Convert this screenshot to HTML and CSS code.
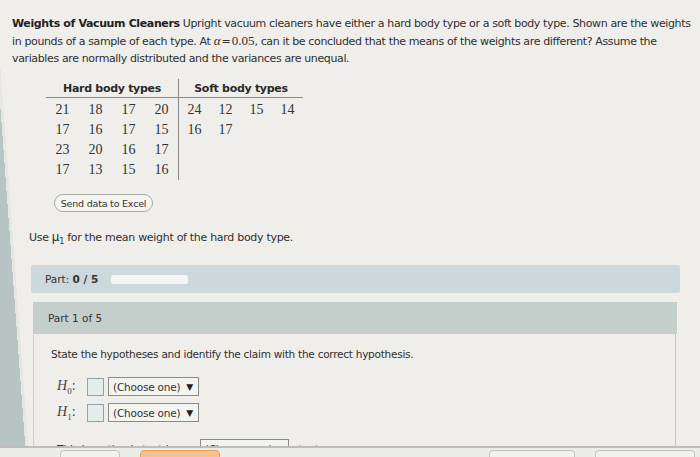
FILE: index.html
```html
<!DOCTYPE html>
<html>
<head>
<meta charset="utf-8">
<link rel="stylesheet" href="styles.css">
</head>
<body>
<div class="page">
  <p class="intro"><b>Weights of Vacuum Cleaners</b> Upright vacuum cleaners have either a hard body type or a soft body type. Shown are the weights in pounds of a sample of each type. At <span class="math">α</span><span class="eq">=</span><span class="num">0.05</span>, can it be concluded that the means of the weights are different? Assume the variables are normally distributed and the variances are unequal.</p>

  <table class="data">
    <thead>
      <tr><th colspan="4" class="hard">Hard body types</th><th colspan="4" class="soft">Soft body types</th></tr>
    </thead>
    <tbody>
      <tr><td>21</td><td>18</td><td>17</td><td>20</td><td class="s first">24</td><td class="s">12</td><td class="s">15</td><td class="s">14</td></tr>
      <tr><td>17</td><td>16</td><td>17</td><td>15</td><td class="s first">16</td><td class="s">17</td><td class="s"></td><td class="s"></td></tr>
      <tr><td>23</td><td>20</td><td>16</td><td>17</td><td class="s first"></td><td class="s"></td><td class="s"></td><td class="s"></td></tr>
      <tr><td>17</td><td>13</td><td>15</td><td>16</td><td class="s first"></td><td class="s"></td><td class="s"></td><td class="s"></td></tr>
    </tbody>
  </table>

  <div class="excel-row"><span class="excel-btn">Send data to Excel</span></div>

  <p class="hint">Use <span class="mu">μ<sub>1</sub></span> for the mean weight of the hard body type.</p>

  <div class="parts">
    <div class="progress">
      <span>Part: <b>0 / 5</b></span>
      <span class="track"></span>
    </div>
    <div class="part-head">Part 1 of 5</div>
    <div class="part-body">
      <p class="task">State the hypotheses and identify the claim with the correct hypothesis.</p>
      <div class="hyp">
        <span class="hlabel"><i>H</i><sub>0</sub>:</span>
        <span class="box"></span>
        <span class="select">(Choose one) <span class="arrow">▼</span></span>
      </div>
      <div class="hyp">
        <span class="hlabel"><i>H</i><sub>1</sub>:</span>
        <span class="box"></span>
        <span class="select">(Choose one) <span class="arrow">▼</span></span>
      </div>
      <div class="hyp third">
        <span class="plain">This hypothesis test is a</span>
        <span class="select wide">(Choose one) <span class="arrow">▼</span></span>
        <span class="plain">test.</span>
      </div>
    </div>
  </div>

  <div class="footer">
    <span class="fbtn grey1"></span>
    <span class="fbtn orange"></span>
    <span class="spacer"></span>
    <span class="fbtn grey2"></span>
    <span class="fbtn grey3"></span>
  </div>
</div>
</body>
</html>
```

FILE: styles.css
```css
html, body {
  margin: 0;
  padding: 0;
}
body {
  background: #efeeea;
  font-family: "DejaVu Sans", Verdana, sans-serif;
  color: #2f2f2f;
}
.page {
  width: 700px;
  height: 457px;
  overflow: hidden;
  background: linear-gradient(85.8deg, #b8c3c3 0 26px, #e6e7e3 26px 29px, #efeeea 29px);
  display: flex;
  flex-direction: column;
  align-items: flex-start;
}
.intro {
  margin: 15px 0 0 12px;
  width: 688px;
  font-size: 11px;
  line-height: 17px;
  letter-spacing: -0.37px;
}
.intro b {
  color: #222;
}
.math {
  font-family: "Liberation Serif", serif;
  font-style: italic;
  font-size: 13px;
  letter-spacing: 0;
  margin-right: 1px;
}
.eq {
  letter-spacing: 0;
  margin-right: 1px;
}
.num {
  font-family: "Liberation Serif", serif;
  font-size: 13px;
  letter-spacing: 0;
}
.data {
  margin: 12px 0 0 46px;
  border-collapse: collapse;
}
.data th {
  font-size: 11px;
  font-weight: bold;
  height: 18px;
  padding: 0;
  border-bottom: 1px solid #8a8a8a;
  vertical-align: middle;
  letter-spacing: -0.3px;
  color: #2a2a2a;
}
.data th.soft {
  border-left: 1px solid #8a8a8a;
}
.data td {
  font-family: "Liberation Serif", serif;
  font-size: 14px;
  width: 33px;
  min-width: 33px;
  height: 20px;
  padding: 0;
  text-align: center;
  color: #333;
}
.data td.s {
  width: 31px;
  min-width: 31px;
}
.data td.first {
  border-left: 1px solid #8a8a8a;
}
.data tbody tr:first-child td {
  padding-top: 2px;
}
.excel-row {
  margin: 14px 0 0 54px;
  display: flex;
}
.excel-btn {
  display: inline-flex;
  align-items: center;
  justify-content: center;
  width: 97px;
  height: 16px;
  border: 1px solid #a9a9a7;
  border-radius: 9px;
  background: #f4f4f1;
  font-size: 9.5px;
  letter-spacing: -0.2px;
  color: #333;
}
.hint {
  margin: 17px 0 0 29px;
  font-size: 11px;
  line-height: 17px;
  letter-spacing: -0.3px;
}
.mu {
  font-size: 12px;
}
.mu sub {
  font-size: 8px;
}
.parts {
  margin: 15px 0 0 31px;
  width: 649px;
  display: flex;
  flex-direction: column;
}
.progress {
  height: 28px;
  background: #cdd8dc;
  border-radius: 2px;
  display: flex;
  align-items: center;
  gap: 13px;
  padding-left: 14px;
  font-size: 10.5px;
  color: #333;
}
.track {
  width: 77px;
  height: 9px;
  background: #f3f4f3;
  border-radius: 2px;
}
.part-head {
  margin: 9px 3px 0 2px;
  height: 32px;
  background: #c4cecb;
  display: flex;
  align-items: center;
  padding-left: 15px;
  font-size: 10.5px;
  color: #333;
}
.part-body {
  margin: 0 4px 0 2px;
  height: 112px;
  overflow: hidden;
  border-left: 1px solid #cfcfcb;
  border-right: 1px solid #c6c6c2;
  box-sizing: border-box;
  padding-left: 17px;
}
.task {
  margin: 13px 0 0 0;
  font-size: 10.5px;
  line-height: 14px;
  letter-spacing: -0.25px;
}
.hyp {
  display: flex;
  align-items: center;
  gap: 4px;
  margin-top: 16px;
  height: 19px;
}
.hyp + .hyp {
  margin-top: 7px;
}
.hyp.third {
  margin-top: 17px;
}
.hlabel {
  font-family: "Liberation Serif", serif;
  font-size: 14px;
  color: #444;
  width: 26px;
  padding-left: 6px;
}
.hlabel sub {
  font-size: 9px;
}
.box {
  width: 15px;
  height: 16px;
  border: 1px solid #8fa3a8;
  background: #e5ecec;
}
.select {
  width: 80px;
  height: 17px;
  border: 1px solid #8a8a88;
  background: #f3f3f0;
  font-size: 10.5px;
  letter-spacing: -0.2px;
  display: flex;
  align-items: center;
  justify-content: space-between;
  padding: 0 5px 0 4px;
  color: #333;
}
.arrow {
  font-size: 9px;
  color: #222;
}
.plain {
  font-size: 10.5px;
  padding-left: 6px;
}
.select.wide {
  width: 78px;
  margin-left: 12px;
}
.footer {
  flex: 1;
  align-self: stretch;
  display: flex;
  align-items: flex-end;
  gap: 20px;
  padding: 2px 5px 0 60px;
  background: #ecece8;
  border-top: 2px solid #bdbeba;
  overflow: hidden;
}
.fbtn {
  height: 20px;
  margin-bottom: -15px;
  border: 1px solid #c3c3c0;
  border-radius: 4px;
  background: #f1f1ee;
}
.grey1 { width: 58px; }
.orange { width: 78px; background: #f6c28f; border-color: #eba160; }
.spacer { flex: 1; }
.grey2 { width: 84px; }
.grey3 { width: 98px; }
```
